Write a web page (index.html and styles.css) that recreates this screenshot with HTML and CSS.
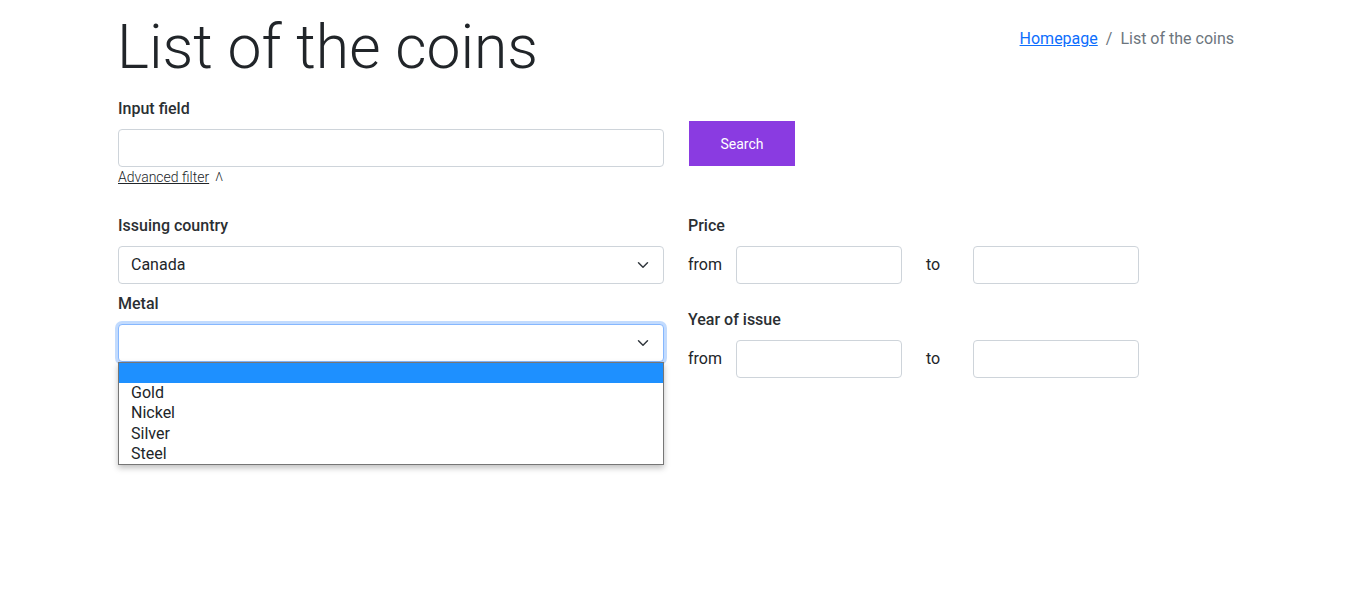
FILE: index.html
```html
<!DOCTYPE html>
<html lang="en">
<head>
<meta charset="utf-8">
<title>List of the coins</title>
<link rel="stylesheet" href="styles.css">
</head>
<body>
<div class="container">
  <header class="page-header">
    <h1 class="title">List of the coins</h1>
    <nav class="breadcrumb">
      <a href="#" class="crumb-link">Homepage</a>
      <span class="crumb-sep">/</span>
      <span class="crumb-active">List of the coins</span>
    </nav>
  </header>

  <div class="search-row">
    <div class="col-left">
      <label class="form-label">Input field</label>
      <div class="form-control"></div>
      <div class="adv"><a href="#" class="adv-link">Advanced filter</a><span class="adv-caret">Λ</span></div>
    </div>
    <div class="col-right">
      <button class="btn-search">Search</button>
    </div>
  </div>

  <div class="filter-row">
    <div class="col-left">
      <label class="form-label">Issuing country</label>
      <div class="form-select"><span>Canada</span></div>
      <label class="form-label label-metal">Metal</label>
      <div class="select-wrap">
        <div class="form-select focused"></div>
        <ul class="dropdown">
          <li class="opt selected">&nbsp;</li>
          <li class="opt">Gold</li>
          <li class="opt">Nickel</li>
          <li class="opt">Silver</li>
          <li class="opt">Steel</li>
        </ul>
      </div>
    </div>
    <div class="col-right">
      <label class="form-label">Price</label>
      <div class="range">
        <span class="range-from">from</span>
        <div class="form-control small"></div>
        <span class="range-to">to</span>
        <div class="form-control small"></div>
      </div>
      <label class="form-label label-year">Year of issue</label>
      <div class="range">
        <span class="range-from">from</span>
        <div class="form-control small"></div>
        <span class="range-to">to</span>
        <div class="form-control small"></div>
      </div>
    </div>
  </div>
</div>
</body>
</html>
```
FILE: styles.css
```css
* { box-sizing: border-box; }
html, body { margin: 0; padding: 0; background: #fff; }
body {
  min-height: 604px;
  font-family: Roboto, "Liberation Sans", sans-serif;
  font-size: 16px;
  line-height: 1.5;
  color: #212529;
}
.container {
  width: 1116px;
  margin-left: 118px;
  padding-bottom: 160px;
}
.page-header {
  display: flex;
  justify-content: space-between;
  align-items: flex-start;
}
.title {
  margin: 12px 0 0 -1px;
  font-size: 60.6px;
  font-weight: 300;
  line-height: 72px;
  color: #212529;
}
.breadcrumb {
  display: flex;
  gap: 8px;
  padding-top: 27px;
  font-size: 16px;
  line-height: 24px;
}
.crumb-link { color: #0d6efd; text-decoration: underline; }
.crumb-sep, .crumb-active { color: #6c757d; }
.search-row, .filter-row {
  display: flex;
}
.col-left { width: 546px; }
.col-right { margin-left: 24px; flex: 1; }
.search-row .col-right { margin-left: 25px; }
.form-label {
  display: block;
  margin: 0 0 8px;
  font-weight: 500;
  font-size: 16px;
  line-height: 24px;
  color: #2b2f33;
}
.search-row .form-label { margin-top: 13px; }
.form-control {
  height: 38px;
  border: 1px solid #ced4da;
  border-radius: 4px;
  background: #fff;
}
.adv {
  display: flex;
  align-items: center;
  gap: 6px;
  font-size: 14px;
  line-height: 20px;
}
.adv-link {
  color: #212529;
  font-weight: 300;
  text-decoration: underline;
}
.adv-caret {
  font-size: 12px;
  font-weight: 300;
  color: #212529;
}
.btn-search {
  margin-top: 37px;
  width: 106px;
  height: 45px;
  border: 0;
  border-radius: 0;
  background: #8a3be1;
  color: #fff;
  font-family: Roboto, "Liberation Sans", sans-serif;
  font-size: 14px;
}
.filter-row { margin-top: 27px; }
.form-select {
  height: 38px;
  border: 1px solid #ced4da;
  border-radius: 4px;
  background: #fff url("data:image/svg+xml,%3csvg xmlns='http://www.w3.org/2000/svg' viewBox='0 0 16 16'%3e%3cpath fill='none' stroke='%23343a40' stroke-linecap='round' stroke-linejoin='round' stroke-width='2' d='m2 5 6 6 6-6'/%3e%3c/svg%3e") no-repeat right 12px center / 16px 12px;
  padding: 0 12px;
  display: flex;
  align-items: center;
  font-size: 16px;
}
.label-metal { margin-top: 8px; }
.select-wrap { position: relative; }
.form-select.focused {
  border-color: #86b7fe;
  box-shadow: 0 0 0 3px rgba(13,110,253,.25);
}
.dropdown {
  position: absolute;
  left: 0;
  top: 38px;
  width: 546px;
  margin: 0;
  padding: 0;
  list-style: none;
  background: #fff;
  border: 1px solid #767676;
  box-shadow: 0 3px 6px rgba(0,0,0,.25);
  font-size: 16px;
  z-index: 5;
}
.opt {
  height: 20.2px;
  line-height: 20px;
  padding-left: 12px;
  color: #212529;
}
.opt.selected { background: #1e90ff; }
.range {
  display: flex;
  align-items: center;
}
.range-from { width: 48px; }
.range-to { width: 71px; padding-left: 24px; }
.form-control.small { width: 166px; }
.label-year { margin-top: 24px; }
```
